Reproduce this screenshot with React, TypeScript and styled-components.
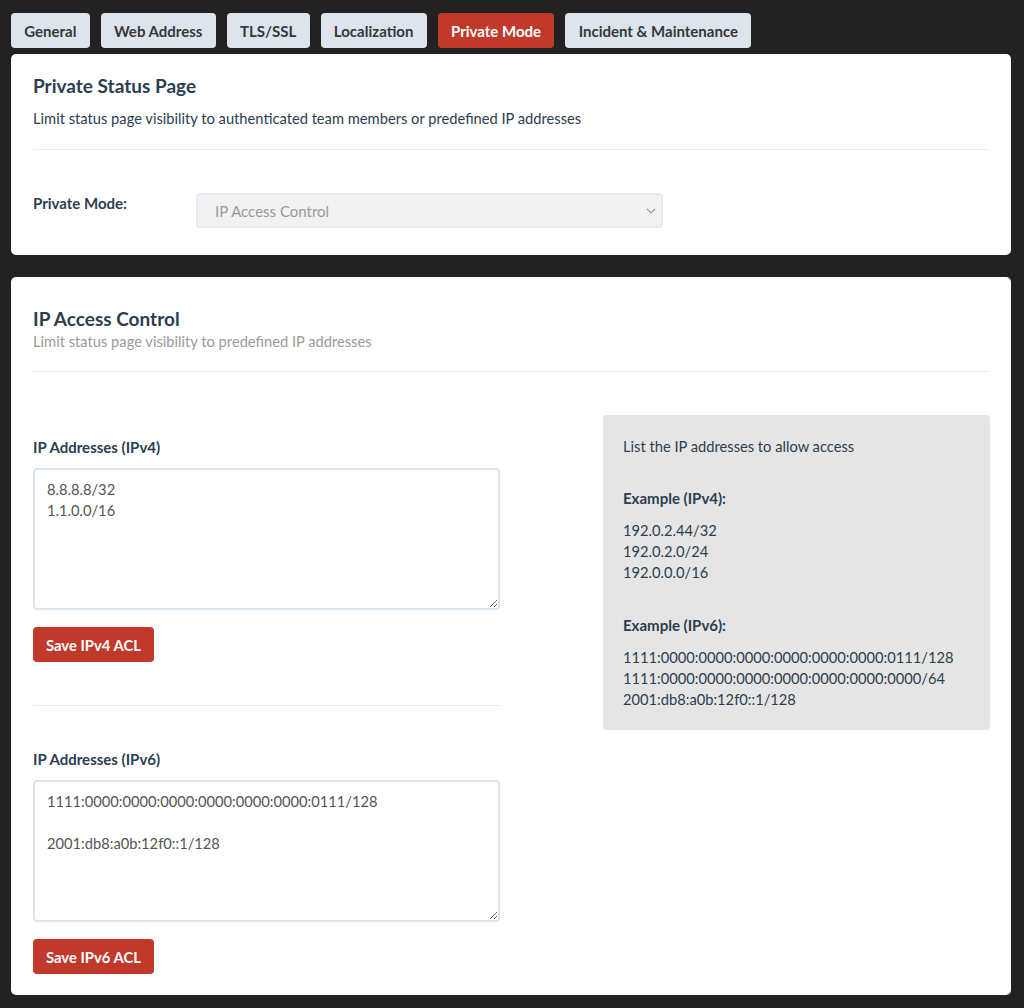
import React from "react";
import styled, { createGlobalStyle } from "styled-components";

const Global = createGlobalStyle`
  html, body { margin: 0; padding: 0; background: #222222; }
  body { font-family: Lato, "Open Sans", "Liberation Sans", sans-serif; -webkit-font-smoothing: antialiased; }
  * { box-sizing: border-box; }
`;

const Page = styled.div`
  padding: 13px 13px 12px 11px;
  display: flex;
  flex-direction: column;
`;

const Tabs = styled.nav`
  display: flex;
  gap: 11px;
  margin-bottom: 6px;
`;

const Tab = styled.button<{ $active?: boolean }>`
  height: 35px;
  padding: 0 13.3px;
  border: none;
  border-radius: 4px;
  font-family: inherit;
  font-size: 15px;
  font-weight: 700;
  color: ${(p) => (p.$active ? "#ffffff" : "#34383c")};
  background: ${(p) => (p.$active ? "#c0392b" : "#dde4ec")};
  cursor: pointer;
`;

const Card = styled.section<{ $top: number; $bottom: number }>`
  background: #ffffff;
  border-radius: 5px;
  padding: ${(p) => p.$top}px 21px ${(p) => p.$bottom}px 22px;
  margin-bottom: 22px;
  color: #2c3e50;
`;

const Title = styled.h2`
  margin: 0;
  font-size: 19px;
  line-height: 22px;
  font-weight: 700;
  color: #2c3e50;
`;

const Lead = styled.p<{ $muted?: boolean; $gap: number }>`
  margin: ${(p) => p.$gap}px 0 0;
  font-size: 14.7px;
  line-height: 20px;
  color: ${(p) => (p.$muted ? "#9a9a9a" : "#2c3e50")};
`;

const Divider = styled.hr<{ $top: number; $bottom: number }>`
  border: none;
  height: 1px;
  background: #ececec;
  margin: ${(p) => p.$top}px 0 ${(p) => p.$bottom}px;
`;

const FormRow = styled.div`
  display: grid;
  grid-template-columns: 163px 467px;
  align-items: start;
`;

const RowLabel = styled.label`
  font-size: 15px;
  font-weight: 700;
  line-height: 20px;
  color: #2c3e50;
`;

const SelectBox = styled.div`
  height: 35px;
  background: #f2f2f2;
  border: 2px solid #e6ebf1;
  border-radius: 4px;
  display: flex;
  align-items: center;
  justify-content: space-between;
  padding: 0 4px 0 17px;
  font-size: 15px;
  color: #9a9a9a;
`;

const Columns = styled.div`
  display: grid;
  grid-template-columns: 467px 387px;
  justify-content: space-between;
  align-items: start;
`;

const LeftCol = styled.div`
  padding-top: 22px;
  display: flex;
  flex-direction: column;
`;

const FieldLabel = styled.label`
  display: block;
  font-size: 15px;
  font-weight: 700;
  line-height: 20px;
  margin-bottom: 11px;
  color: #2c3e50;
`;

const Area = styled.textarea`
  display: block;
  width: 100%;
  height: 142px;
  border: 2px solid #dde4ec;
  border-radius: 4px;
  padding: 9px 12px;
  font-family: inherit;
  font-size: 14.7px;
  line-height: 21px;
  color: #555555;
  background: #ffffff;
  resize: vertical;
  outline: none;
`;

const SaveButton = styled.button`
  align-self: flex-start;
  margin-top: 17px;
  height: 35px;
  padding: 0 13px;
  border: none;
  border-radius: 4px;
  background: #c0392b;
  color: #ffffff;
  font-family: inherit;
  font-size: 14.8px;
  font-weight: 700;
  cursor: pointer;
`;

const HelpPanel = styled.aside`
  background: #e5e5e5;
  border-radius: 4px;
  padding: 21px 20px 20px;
  font-size: 14.7px;
  line-height: 21px;
  color: #2c3e50;
`;

const HelpText = styled.p<{ $gap: number }>`
  margin: ${(p) => p.$gap}px 0 0;
`;

const HelpHeading = styled.p<{ $gap: number }>`
  margin: ${(p) => p.$gap}px 0 0;
  font-size: 15px;
  font-weight: 700;
`;

const tabs = ["General", "Web Address", "TLS/SSL", "Localization", "Private Mode", "Incident & Maintenance"];

export default function App() {
  return (
    <>
      <Global />
      <Page>
        <Tabs>
          {tabs.map((t) => (
            <Tab key={t} $active={t === "Private Mode"}>
              {t}
            </Tab>
          ))}
        </Tabs>

        <Card $top={21} $bottom={27}>
          <Title>Private Status Page</Title>
          <Lead $gap={11}>Limit status page visibility to authenticated team members or predefined IP addresses</Lead>
          <Divider $top={21} $bottom={43} />
          <FormRow>
            <RowLabel>Private Mode:</RowLabel>
            <SelectBox>
              <span>IP Access Control</span>
              <svg width="12" height="8" viewBox="0 0 12 8" fill="none">
                <path d="M2 2 L6 6 L10 2" stroke="#9a9a9a" strokeWidth="1.1" />
              </svg>
            </SelectBox>
          </FormRow>
        </Card>

        <Card $top={31} $bottom={21}>
          <Title>IP Access Control</Title>
          <Lead $muted $gap={1}>Limit status page visibility to predefined IP addresses</Lead>
          <Divider $top={20} $bottom={43} />
          <Columns>
            <LeftCol>
              <FieldLabel>IP Addresses (IPv4)</FieldLabel>
              <Area defaultValue={"8.8.8.8/32\n1.1.0.0/16"} />
              <SaveButton>Save IPv4 ACL</SaveButton>
              <Divider $top={43} $bottom={43} />
              <FieldLabel>IP Addresses (IPv6)</FieldLabel>
              <Area defaultValue={"1111:0000:0000:0000:0000:0000:0000:0111/128\n\n2001:db8:a0b:12f0::1/128"} />
              <SaveButton>Save IPv6 ACL</SaveButton>
            </LeftCol>
            <HelpPanel>
              <HelpText $gap={0}>List the IP addresses to allow access</HelpText>
              <HelpHeading $gap={31}>Example (IPv4):</HelpHeading>
              <HelpText $gap={11}>
                192.0.2.44/32
                <br />
                192.0.2.0/24
                <br />
                192.0.0.0/16
              </HelpText>
              <HelpHeading $gap={32}>Example (IPv6):</HelpHeading>
              <HelpText $gap={11}>
                1111:0000:0000:0000:0000:0000:0000:0111/128
                <br />
                1111:0000:0000:0000:0000:0000:0000:0000/64
                <br />
                2001:db8:a0b:12f0::1/128
              </HelpText>
            </HelpPanel>
          </Columns>
        </Card>
      </Page>
    </>
  );
}
